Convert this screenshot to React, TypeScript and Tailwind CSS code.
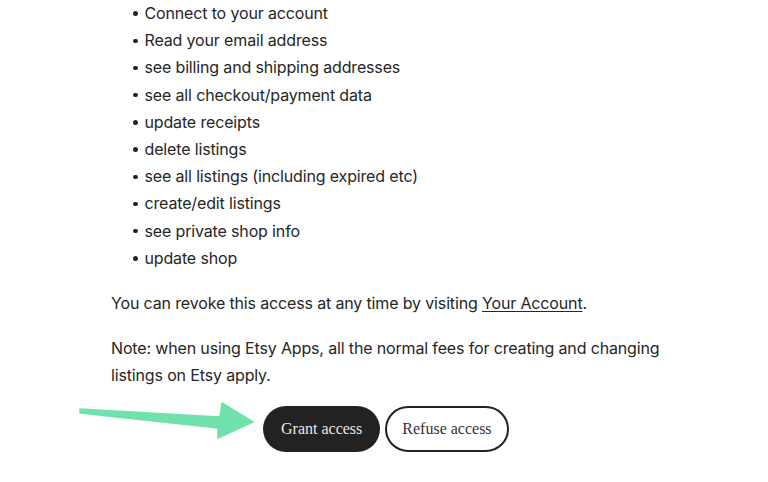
import React from 'react';

const permissions = [
  'Connect to your account',
  'Read your email address',
  'see billing and shipping addresses',
  'see all checkout/payment data',
  'update receipts',
  'delete listings',
  'see all listings (including expired etc)',
  'create/edit listings',
  'see private shop info',
  'update shop',
];

const Arrow: React.FC = () => (
  <svg width="263" height="56" viewBox="0 0 263 56" className="shrink-0">
    <polygon
      points="80,8 220,16 222,2 253,21 218,37 218,27 80,12"
      fill="#72e2ad"
      stroke="#72e2ad"
      strokeWidth="1.5"
      strokeLinejoin="round"
    />
  </svg>
);

const App: React.FC = () => {
  return (
    <div
      className="w-[768px] h-[482px] bg-white text-[#262626] overflow-hidden tracking-[-0.15px]"
      style={{ fontFamily: 'Inter, "Noto Sans", sans-serif' }}
    >
      <ul className="pl-[133px] text-[16px] leading-[27.2px]">
        {permissions.map((p) => (
          <li key={p} className="flex items-center">
            <span className="w-[4.5px] h-[4.5px] rounded-full bg-[#262626] mr-[7px]" />
            <span>{p}</span>
          </li>
        ))}
      </ul>

      <div className="pl-[111px] pr-[90px] text-[16px] leading-[27px]">
        <p className="mt-[18px]">
          You can revoke this access at any time by visiting{' '}
          <a className="underline underline-offset-2">Your Account</a>.
        </p>
        <p className="mt-[18px]">
          Note: when using Etsy Apps, all the normal fees for creating and changing listings on Etsy apply.
        </p>
      </div>

      <div className="flex items-center mt-[12px] h-[56px]">
        <Arrow />
        <div className="flex gap-[5px] tracking-normal" style={{ fontFamily: '"Liberation Serif", "DejaVu Serif", serif' }}>
          <button className="h-[46px] px-[18px] rounded-full bg-[#222222] text-[#e8e8e8] text-[16px]">
            Grant access
          </button>
          <button className="h-[46px] px-[15px] rounded-full border-2 border-[#222222] bg-white text-[#333333] text-[16px]">
            Refuse access
          </button>
        </div>
      </div>
    </div>
  );
};

export default App;
